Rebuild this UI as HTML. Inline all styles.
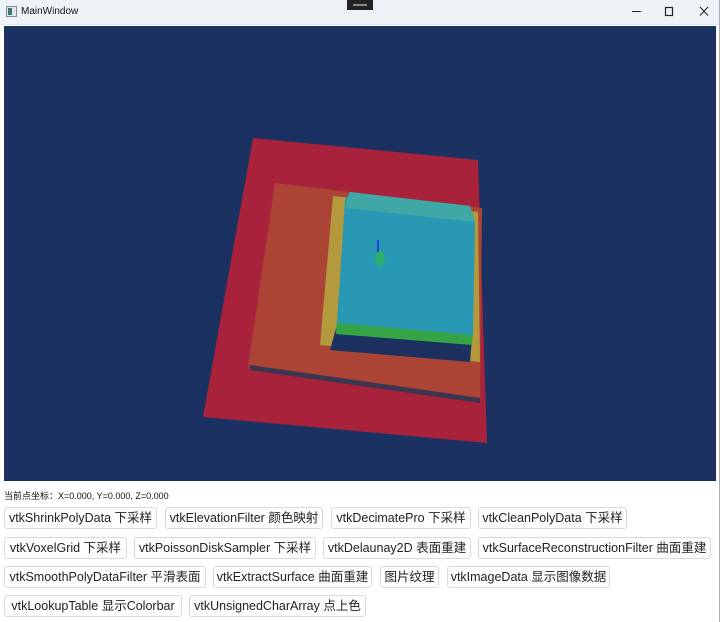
<!DOCTYPE html>
<html><head><meta charset="utf-8"><style>
*{margin:0;padding:0;box-sizing:border-box}
body{width:720px;height:622px;background:#fff;font-family:"Liberation Sans","Noto Sans CJK SC",sans-serif;position:relative;overflow:hidden}
.tb{position:absolute;left:0;top:0;width:720px;height:25px;background:#eef3f8;border-bottom:1px solid #e2e8ee}
.tb .t{position:absolute;left:21px;top:6px;font-size:10px;color:#111}
.ic{position:absolute;left:6px;top:6px;width:11px;height:11px;border:1px solid #889;background:#dfe6ee}
.ic:after{content:"";position:absolute;left:1px;top:1px;width:4px;height:7px;background:#3d7a6a}
.notch{position:absolute;left:347px;top:0;width:26px;height:10px;background:#222}
.notch:after{content:"";position:absolute;left:6px;top:4px;width:14px;height:2px;background:#888}
.vp{position:absolute;left:4px;top:26px;width:712px;height:455px;background:#1a3161}
.lbl{position:absolute;left:4px;top:489px;font-size:9px;color:#111}
.b{position:absolute;height:22px;border:1px solid #dadada;border-radius:3px;background:#fdfdfd;font-size:12.5px;color:#222;text-align:center;line-height:20px;white-space:nowrap}
.frame{position:absolute;right:0;top:0;width:1px;height:622px;background:#aab}
</style></head><body>
<div class="tb"><div class="ic"></div><div class="t">MainWindow</div>
<svg style="position:absolute;left:620px;top:0" width="100" height="25">
<line x1="12" y1="11.5" x2="21" y2="11.5" stroke="#222" stroke-width="1"/>
<rect x="45.5" y="7.5" width="7" height="8" fill="none" stroke="#222" stroke-width="1.2"/>
<path d="M80 7 L88 15.5 M88 7 L80 15.5" stroke="#222" stroke-width="1"/>
</svg></div>
<div class="notch"></div>
<div class="vp">
<svg width="712" height="455" style="position:absolute;left:-4px;top:-26px;overflow:visible">
<polygon points="253,138 478,160 487,443 203,417" fill="#a8223c"/>
<polygon points="275,183 482,208 480,402 248,367" fill="#ab4434"/>
<polygon points="250,365 480,398 480,403 250,370" fill="#3a3550"/>
<polygon points="333,196 478,212 480,362 320,345" fill="#b49a3c"/>
<polygon points="337,325 472,338 470,362 330,350" fill="#1d3161"/>
<polygon points="337,318 473,332 472,345 336,334" fill="#34a444"/>
<polygon points="350,192 470,206 475,222 473,335 337,323 345,200" fill="#2898b4"/>
<polygon points="350,192 470,206 475,222 345,208" fill="#40a8a4"/>
<ellipse cx="380" cy="258" rx="5" ry="8" fill="#2ab070"/>
<line x1="378" y1="240" x2="378" y2="252" stroke="#2020f0" stroke-width="1.5"/>
</svg>
</div>
<div class="lbl">当前点坐标：X=0.000, Y=0.000, Z=0.000</div>
<div class="b" style="left:4px;top:507px;width:153px">vtkShrinkPolyData 下采样</div>
<div class="b" style="left:165px;top:507px;width:158px">vtkElevationFilter 颜色映射</div>
<div class="b" style="left:331px;top:507px;width:140px">vtkDecimatePro 下采样</div>
<div class="b" style="left:478px;top:507px;width:149px">vtkCleanPolyData 下采样</div>
<div class="b" style="left:4px;top:537px;width:123px">vtkVoxelGrid 下采样</div>
<div class="b" style="left:134px;top:537px;width:182px">vtkPoissonDiskSampler 下采样</div>
<div class="b" style="left:323px;top:537px;width:148px">vtkDelaunay2D 表面重建</div>
<div class="b" style="left:478px;top:537px;width:233px">vtkSurfaceReconstructionFilter 曲面重建</div>
<div class="b" style="left:4px;top:566px;width:202px">vtkSmoothPolyDataFilter 平滑表面</div>
<div class="b" style="left:213px;top:566px;width:159px">vtkExtractSurface 曲面重建</div>
<div class="b" style="left:380px;top:566px;width:59px">图片纹理</div>
<div class="b" style="left:447px;top:566px;width:163px">vtkImageData 显示图像数据</div>
<div class="b" style="left:4px;top:595px;width:178px">vtkLookupTable 显示Colorbar</div>
<div class="b" style="left:189px;top:595px;width:177px">vtkUnsignedCharArray 点上色</div>
<div class="frame"></div>
</body></html>
